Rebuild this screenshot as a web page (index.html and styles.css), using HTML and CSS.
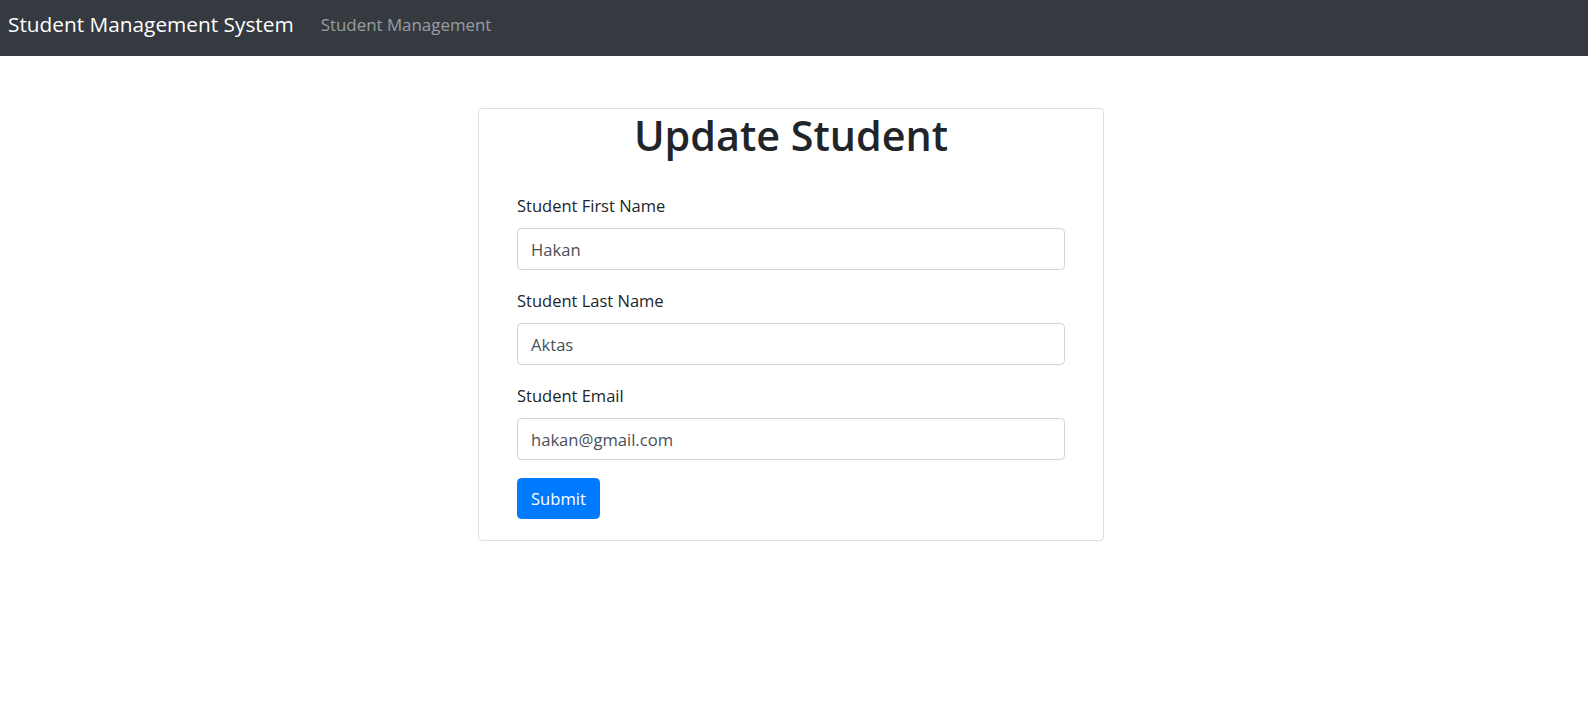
FILE: index.html
```html
<!DOCTYPE html>
<html lang="en">
<head>
<meta charset="utf-8">
<title>Student Management System</title>
<link rel="stylesheet" href="styles.css">
</head>
<body>
<nav class="navbar">
  <a class="brand" href="#">Student Management System</a>
  <a class="nav-link" href="#">Student Management</a>
</nav>
<main class="page">
  <div class="card">
    <h1 class="card-title">Update Student</h1>
    <form class="card-body">
      <div class="form-group">
        <label class="form-label" for="first">Student First Name</label>
        <input class="form-control" id="first" type="text" value="Hakan">
      </div>
      <div class="form-group">
        <label class="form-label" for="last">Student Last Name</label>
        <input class="form-control" id="last" type="text" value="Aktas">
      </div>
      <div class="form-group">
        <label class="form-label" for="email">Student Email</label>
        <input class="form-control" id="email" type="text" value="hakan@gmail.com">
      </div>
      <button class="btn-primary" type="button">Submit</button>
    </form>
  </div>
</main>
</body>
</html>
```
FILE: styles.css
```css
* { box-sizing: border-box; }
html, body { margin: 0; padding: 0; background: #fff; }
body {
  font-family: "Open Sans", "Noto Sans", sans-serif;
  color: #212529;
}
.navbar {
  height: 56px;
  background: #343a40;
  display: flex;
  align-items: center;
  padding: 0 8px 6px;
}
.brand {
  color: #fff;
  font-size: 20.8px;
  text-decoration: none;
  margin-right: 27px;
  line-height: 1.5;
}
.nav-link {
  color: rgba(255, 255, 255, 0.5);
  font-size: 16.9px;
  text-decoration: none;
  line-height: 1.5;
}
.page {
  display: flex;
  justify-content: center;
  padding: 52px 6px 0 0;
}
.card {
  width: 626px;
  border: 1px solid rgba(0, 0, 0, 0.125);
  border-radius: 4.4px;
  background: #fff;
}
.card-title {
  margin: 0 0 9px;
  text-align: center;
  font-size: 41.3px;
  font-weight: 600;
  line-height: 53px;
  color: #212529;
}
.card-body {
  padding: 22px 38px 21px;
  margin: 0;
}
.form-group { margin-bottom: 18px; }
.form-label {
  display: block;
  font-size: 16.5px;
  line-height: 26px;
  margin-bottom: 9px;
  color: #212529;
}
.form-control {
  display: block;
  width: 100%;
  height: 42px;
  padding: 0 13px;
  font-family: inherit;
  font-size: 16.6px;
  color: #495057;
  background: #fff;
  border: 1px solid #ced4da;
  border-radius: 4.4px;
  outline: none;
}
.btn-primary {
  display: inline-block;
  height: 41px;
  padding: 0 13px;
  font-family: inherit;
  font-size: 16.6px;
  color: #fff;
  background: #007bff;
  border: 1px solid #007bff;
  border-radius: 4.4px;
  cursor: pointer;
}
```
